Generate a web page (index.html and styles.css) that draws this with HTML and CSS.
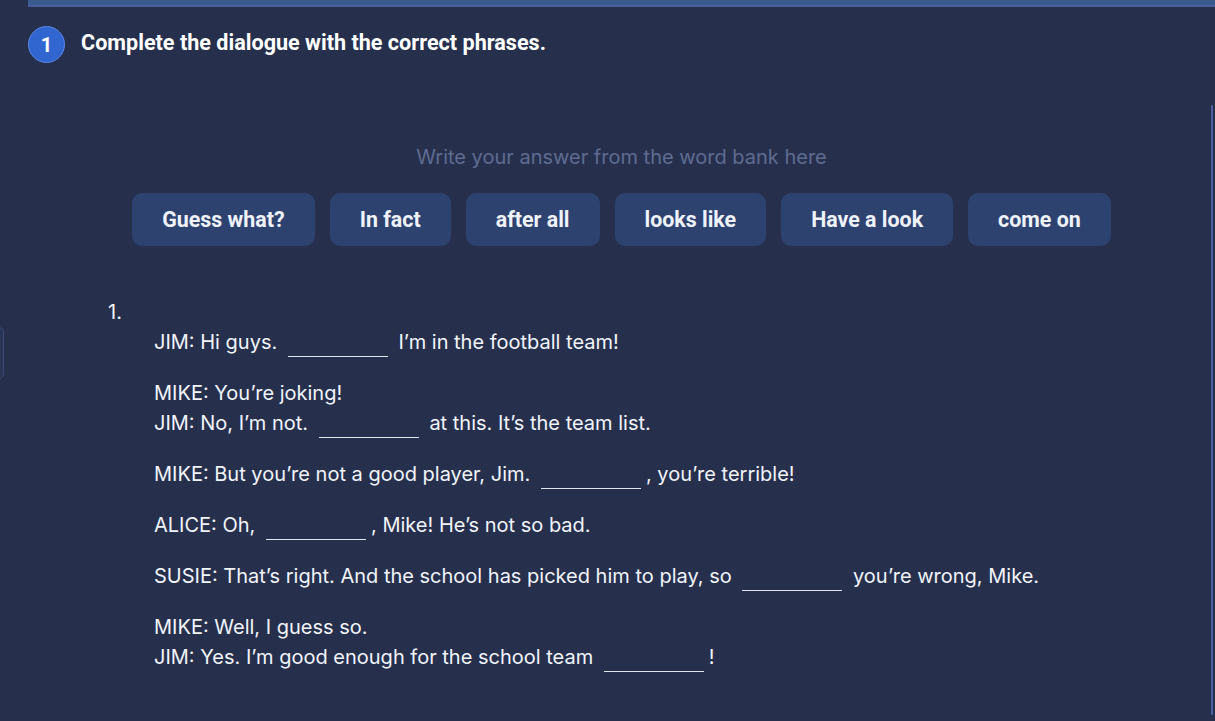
FILE: index.html
```html
<!DOCTYPE html>
<html lang="en">
<head>
  <meta charset="UTF-8" />
  <title>Complete the dialogue</title>
  <link rel="stylesheet" href="styles.css">
</head>
<body>

  <div class="side-handle"></div>

  <div class="page">
    <div class="top-bar"></div>

    <div class="task">
      <div class="task-head">
        <span class="task-num">1</span>
        <h1>Complete the dialogue with the correct phrases.</h1>
      </div>

      <p class="drop-hint">Write your answer from the word bank here</p>

      <div class="word-bank">
        <button class="word">Guess what?</button>
        <button class="word">In fact</button>
        <button class="word">after all</button>
        <button class="word">looks like</button>
        <button class="word">Have a look</button>
        <button class="word">come on</button>
      </div>

      <ol class="dialogue">
        <li>
          <p>JIM: Hi guys. <span class="gap"></span> I’m in the football team!</p>
          <p>MIKE: You’re joking!<br>JIM: No, I’m not. <span class="gap"></span> at this. It’s the team list.</p>
          <p>MIKE: But you’re not a good player, Jim. <span class="gap"></span>, you’re terrible!</p>
          <p>ALICE: Oh, <span class="gap"></span>, Mike! He’s not so bad.</p>
          <p>SUSIE: That’s right. And the school has picked him to play, so <span class="gap"></span> you’re wrong, Mike.</p>
          <p>MIKE: Well, I guess so.<br>JIM: Yes. I’m good enough for the school team <span class="gap"></span>!</p>
        </li>
      </ol>
    </div>
  </div>

</body>
</html>
```

FILE: styles.css
```css
* {
  margin: 0;
  padding: 0;
  box-sizing: border-box;
}

html, body {
  height: 100%;
}

body {
  background: #26304d;
  color: #f1f4fa;
  font-family: Inter, "Noto Sans", sans-serif;
  overflow: hidden;
  position: relative;
}

/* thin panel edge on the right */
body::after {
  content: "";
  position: absolute;
  right: 2px;
  top: 105px;
  bottom: 6px;
  width: 2px;
  background: #4d5f9e;
  border-radius: 2px;
}

.side-handle {
  position: absolute;
  left: -6px;
  top: 327px;
  width: 10px;
  height: 52px;
  border: 1px solid #3c4a73;
  border-radius: 5px;
  background: #2a3454;
}

.page {
  margin-left: 28px;
}

.top-bar {
  height: 7px;
  background: #3b5a8e;
  border-bottom: 2px solid #4c5e9f;
}

.task-head {
  display: flex;
  align-items: center;
  gap: 16px;
  margin-top: 19px;
}

.task-num {
  width: 37px;
  height: 37px;
  border-radius: 50%;
  background: #3166d1;
  border: 1px solid #5b86e2;
  color: #fff;
  font-family: Roboto, sans-serif;
  font-weight: 700;
  font-size: 20px;
  display: flex;
  justify-content: center;
  align-items: center;
}

h1 {
  font-family: Roboto, sans-serif;
  font-size: 21.6px;
  font-weight: 700;
  color: #fff;
  margin-top: -4px;
}

.drop-hint {
  text-align: center;
  color: #5f6c90;
  font-size: 20px;
  line-height: 24px;
  margin-top: 82px;
}

.word-bank {
  display: flex;
  justify-content: center;
  gap: 15px;
  margin-top: 24px;
}

.word {
  height: 53px;
  padding: 0 30px;
  border: none;
  border-radius: 10px;
  background: #2e4270;
  color: #eef2fa;
  font-family: Roboto, sans-serif;
  font-weight: 700;
  font-size: 21.4px;
}

.dialogue {
  margin-top: 51px;
  margin-left: 80px;
  list-style: none;
  font-size: 20px;
  line-height: 30px;
}

.dialogue li::before {
  content: "1.";
  display: block;
}

.dialogue p {
  margin-left: 46px;
  margin-bottom: 21px;
}

.gap {
  display: inline-block;
  width: 100px;
  height: 1px;
  margin: 0 5px;
  border-bottom: 1px solid #dfe4ef;
  vertical-align: -8px;
}
```
